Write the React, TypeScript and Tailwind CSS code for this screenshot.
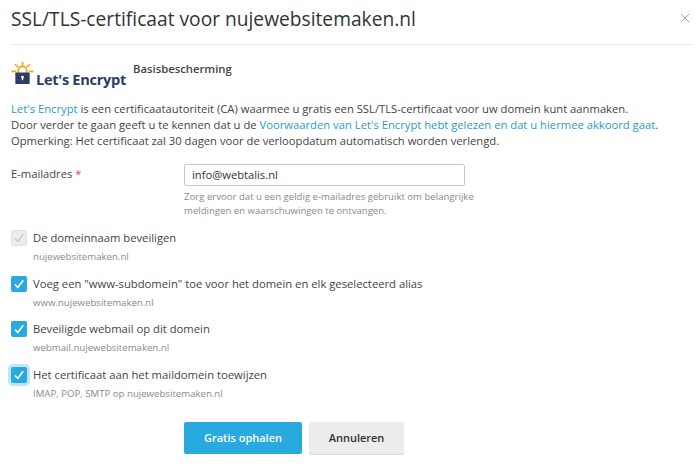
import { ReactNode } from "react";

function LockLogo() {
  return (
    <svg width="23" height="24" viewBox="0 0 24 24" className="block">
      <path d="M11 0.5h2l-.3 5h-1.4zM3.5 3.5l1.2-1.2 3.4 3.2-1 1zM20.5 3.5l-1.2-1.2-3.4 3.2 1 1zM0.5 9.5h5v1.6h-5zM18.5 9.5h5v1.6h-5z" fill="#f9a11b" />
      <path d="M7.6 12V9.6a4.4 4.4 0 0 1 8.8 0V12" fill="none" stroke="#f9a11b" strokeWidth="1.8" />
      <rect x="4.5" y="11.5" width="15" height="12" rx="0.8" fill="#2c3c69" />
      <circle cx="12" cy="16.3" r="1.5" fill="#fff" />
      <rect x="11.3" y="16.5" width="1.4" height="3" fill="#fff" />
    </svg>
  );
}

function CheckRow({ label, sub, state }: { label: ReactNode; sub: string; state: "disabled" | "on" | "focus" }) {
  const box =
    state === "disabled"
      ? "bg-[#ececec] border border-[#e2e2e2]"
      : state === "focus"
        ? "bg-[#28a9e0] ring-[3px] ring-[#bfe6f8]"
        : "bg-[#28a9e0]";
  return (
    <div className="flex gap-[6px] h-[45.5px]">
      <span className={`w-4 h-4 mt-[1px] rounded-[2px] shrink-0 flex items-center justify-center ${box}`}>
        <svg width="12" height="12" viewBox="0 0 12 12" fill="none" stroke={state === "disabled" ? "#c4c4c4" : "#fff"} strokeWidth={state === "disabled" ? 1.2 : 1.7}>
          <path d="M2 6.5l2.8 3L10.2 2.3" />
        </svg>
      </span>
      <div>
        <div className="text-[11.25px] leading-[18px] text-[#444]">{label}</div>
        <div className="text-[9.65px] leading-[16px] mt-[2px] text-[#8a8a8a]">{sub}</div>
      </div>
    </div>
  );
}

export default function App() {
  return (
    <div className="w-[700px] h-[468px] bg-white overflow-hidden font-['Open_Sans',sans-serif] text-[#444] pl-[11px] pr-[7px]">
      <div className="h-[45px] border-b border-[#e3e5ec] flex items-start justify-between">
        <h1 className="text-[19.2px] leading-[28px] mt-[5px] text-[#333] font-normal">SSL/TLS-certificaat voor nujewebsitemaken.nl</h1>
        <svg width="10" height="10" viewBox="0 0 10 10" className="mt-[13px] mr-[3px]" stroke="#999" strokeWidth="0.9">
          <path d="M1 1l8 8M9 1l-8 8" />
        </svg>
      </div>

      <div className="flex items-start mt-[15px] h-[39px]">
        <div className="flex items-end h-[24px] mt-[1px]">
          <LockLogo />
          <span className="text-[14.6px] leading-[18px] font-bold text-[#2c3c69] ml-[2px] mb-[-3px] tracking-[-0.3px]">Let's Encrypt</span>
        </div>
        <span className="text-[11.3px] leading-[16px] font-semibold text-[#444] ml-[7px] mt-[1px]">Basisbescherming</span>
      </div>

      <p className="text-[11.24px] leading-[16px] mt-[2px]">
        <span className="text-[#2a9bc9]">Let's Encrypt</span> is een certificaatautoriteit (CA) waarmee u gratis een SSL/TLS-certificaat voor uw domein kunt aanmaken.
        <br />
        Door verder te gaan geeft u te kennen dat u de <span className="text-[#2a9bc9]">Voorwaarden van Let's Encrypt hebt gelezen en dat u hiermee akkoord gaat</span>.
        <br />
        Opmerking: Het certificaat zal 30 dagen voor de verloopdatum automatisch worden verlengd.
      </p>

      <div className="flex mt-[15px]">
        <label className="w-[173px] text-[11.2px] leading-[18px] pt-[1px]">
          E-mailadres <span className="text-[#e5395c]">*</span>
        </label>
        <div>
          <div className="w-[281px] h-[22px] border border-[#c9c9c9] rounded-[2px] px-[7px] text-[11.2px] leading-[20px] text-[#333]">info@webtalis.nl</div>
          <p className="text-[9.6px] leading-[14px] text-[#8a8a8a] mt-[4px]">
            Zorg ervoor dat u een geldig e-mailadres gebruikt om belangrijke
            <br />
            meldingen en waarschuwingen te ontvangen.
          </p>
        </div>
      </div>

      <div className="mt-[11px]">
        <CheckRow state="disabled" label="De domeinnaam beveiligen" sub="nujewebsitemaken.nl" />
        <CheckRow state="on" label={'Voeg een "www-subdomein" toe voor het domein en elk geselecteerd alias'} sub="www.nujewebsitemaken.nl" />
        <CheckRow state="on" label="Beveiligde webmail op dit domein" sub="webmail.nujewebsitemaken.nl" />
        <CheckRow state="focus" label="Het certificaat aan het maildomein toewijzen" sub="IMAP, POP, SMTP op nujewebsitemaken.nl" />
      </div>

      <div className="flex gap-[7px] ml-[173px] mt-[11px]">
        <button className="w-[118px] h-[32px] bg-[#28a9e0] rounded-[2px] text-white text-[11px] font-semibold">Gratis ophalen</button>
        <button className="w-[95px] h-[32px] bg-[#ececec] rounded-[2px] text-[#333] text-[11px] font-semibold shadow-[0_1px_1px_rgba(0,0,0,0.15)]">Annuleren</button>
      </div>
    </div>
  );
}
